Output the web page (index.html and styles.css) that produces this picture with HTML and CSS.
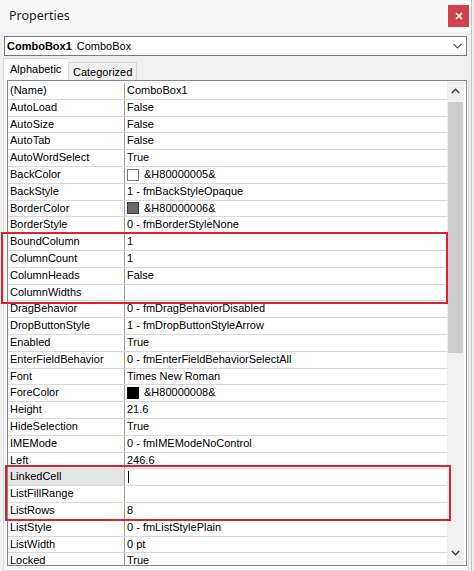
FILE: index.html
```html
<!DOCTYPE html>
<html>
<head>
<meta charset="utf-8">
<link rel="stylesheet" href="styles.css">
</head>
<body>
<div class="window">
  <div class="titlebar">
    <span class="title">Properties</span>
    <div class="close">
      <svg width="8" height="8" viewBox="0 0 8 8"><path d="M1 1L7 7M7 1L1 7" stroke="#fff" stroke-width="1.6"/></svg>
    </div>
  </div>
  <div class="combo">
    <span class="combo-name">ComboBox1</span>
    <span class="combo-type">ComboBox</span>
    <svg class="combo-arrow" width="9" height="6" viewBox="0 0 9 6"><polyline points="0.5,1 4.5,5 8.5,1" fill="none" stroke="#505050" stroke-width="1.1"/></svg>
  </div>
  <div class="tabs">
    <div class="tab active">Alphabetic</div>
    <div class="tab">Categorized</div>
  </div>
  <div class="page">
    <div class="grid">
      <div class="rows">
        <div class="row"><div class="name">(Name)</div><div class="value">ComboBox1</div></div>
        <div class="row"><div class="name">AutoLoad</div><div class="value">False</div></div>
        <div class="row"><div class="name">AutoSize</div><div class="value">False</div></div>
        <div class="row"><div class="name">AutoTab</div><div class="value">False</div></div>
        <div class="row"><div class="name">AutoWordSelect</div><div class="value">True</div></div>
        <div class="row"><div class="name">BackColor</div><div class="value"><span class="swatch sw-white"></span>&amp;H80000005&amp;</div></div>
        <div class="row"><div class="name">BackStyle</div><div class="value">1 - fmBackStyleOpaque</div></div>
        <div class="row"><div class="name">BorderColor</div><div class="value"><span class="swatch sw-gray"></span>&amp;H80000006&amp;</div></div>
        <div class="row"><div class="name">BorderStyle</div><div class="value">0 - fmBorderStyleNone</div></div>
        <div class="row"><div class="name">BoundColumn</div><div class="value">1</div></div>
        <div class="row"><div class="name">ColumnCount</div><div class="value">1</div></div>
        <div class="row"><div class="name">ColumnHeads</div><div class="value">False</div></div>
        <div class="row"><div class="name">ColumnWidths</div><div class="value"></div></div>
        <div class="row"><div class="name">DragBehavior</div><div class="value">0 - fmDragBehaviorDisabled</div></div>
        <div class="row"><div class="name">DropButtonStyle</div><div class="value">1 - fmDropButtonStyleArrow</div></div>
        <div class="row"><div class="name">Enabled</div><div class="value">True</div></div>
        <div class="row"><div class="name">EnterFieldBehavior</div><div class="value">0 - fmEnterFieldBehaviorSelectAll</div></div>
        <div class="row"><div class="name">Font</div><div class="value">Times New Roman</div></div>
        <div class="row"><div class="name">ForeColor</div><div class="value"><span class="swatch sw-black"></span>&amp;H80000008&amp;</div></div>
        <div class="row"><div class="name">Height</div><div class="value">21.6</div></div>
        <div class="row"><div class="name">HideSelection</div><div class="value">True</div></div>
        <div class="row"><div class="name">IMEMode</div><div class="value">0 - fmIMEModeNoControl</div></div>
        <div class="row"><div class="name">Left</div><div class="value">246.6</div></div>
        <div class="row"><div class="name selected">LinkedCell</div><div class="value"><span class="caret"></span></div></div>
        <div class="row"><div class="name">ListFillRange</div><div class="value"></div></div>
        <div class="row"><div class="name">ListRows</div><div class="value">8</div></div>
        <div class="row"><div class="name">ListStyle</div><div class="value">0 - fmListStylePlain</div></div>
        <div class="row"><div class="name">ListWidth</div><div class="value">0 pt</div></div>
        <div class="row"><div class="name">Locked</div><div class="value">True</div></div>
      </div>
      <div class="scrollbar">
        <div class="sb-btn">
          <svg width="9" height="6" viewBox="0 0 9 6"><polyline points="0.8,5 4.5,1.3 8.2,5" fill="none" stroke="#404040" stroke-width="1.5"/></svg>
        </div>
        <div class="sb-thumb"></div>
        <div class="sb-space"></div>
        <div class="sb-btn">
          <svg width="9" height="6" viewBox="0 0 9 6"><polyline points="0.8,1 4.5,4.7 8.2,1" fill="none" stroke="#404040" stroke-width="1.5"/></svg>
        </div>
      </div>
    </div>
  </div>
  <div class="highlight hl-1"></div>
  <div class="highlight hl-2"></div>
</div>
</body>
</html>
```
FILE: styles.css
```css
html, body {
  margin: 0;
  padding: 0;
}
body {
  width: 474px;
  height: 571px;
  overflow: hidden;
  background: #ececec;
  font-family: "Liberation Sans", Arial, sans-serif;
  font-size: 11px;
  color: #000;
}
.window {
  position: relative;
  width: 471px;
  height: 571px;
  border-right: 1px solid #c4c4c4;
  background: #f0f0f0;
  display: flex;
  flex-direction: column;
}
.titlebar {
  height: 32px;
  flex: none;
  background: #f8f8f8;
  display: flex;
  align-items: center;
  justify-content: space-between;
  padding-left: 9px;
}
.title {
  font-family: "Noto Sans", "Liberation Sans", sans-serif;
  font-size: 12.5px;
  color: #1c1c1c;
  margin-top: -1px;
}
.close {
  width: 21px;
  height: 22px;
  margin-right: 2px;
  background: #d0434b;
  display: flex;
  align-items: center;
  justify-content: center;
}
.combo {
  flex: none;
  margin: 4px 4px 0 4px;
  height: 20px;
  box-sizing: border-box;
  border: 1px solid #7a7a7a;
  background: #fff;
  display: flex;
  align-items: center;
  padding-left: 2px;
}
.combo-name {
  font-weight: bold;
  margin-right: 5px;
}
.combo-type {
  flex: 1;
}
.combo-arrow {
  margin-right: 4px;
}
.tabs {
  flex: none;
  height: 22px;
  margin: 2px 0 0 3px;
  display: flex;
  align-items: flex-end;
}
.tab {
  height: 18px;
  box-sizing: border-box;
  border: 1px solid #d9d9d9;
  border-bottom: none;
  padding: 0 4px;
  display: flex;
  align-items: center;
  background: #f0f0f0;
}
.tab.active {
  height: 22px;
  background: #fafafa;
  padding: 0 6px 2px 6px;
  width: 65px;
  border-right: none;
}
.page {
  flex: 1;
  min-height: 0;
  margin: 0 2px 0 3px;
  border: 1px solid #d9d9d9;
  border-top: none;
  background: #fafafa;
  display: flex;
  flex-direction: column;
}
.grid {
  flex: 1;
  min-height: 0;
  margin: 0 1px 4px 3px;
  border: 1px solid #828790;
  background: #fff;
  display: flex;
  overflow: hidden;
}
.rows {
  flex: 1;
  min-width: 0;
  padding-top: 2px;
  overflow: hidden;
}
.row {
  display: grid;
  grid-template-columns: 117px 1fr;
  height: 16.8px;
  box-sizing: border-box;
  border-bottom: 1px solid #d9d9d9;
  line-height: 15.8px;
  white-space: nowrap;
}
.name {
  border-right: 1px solid #a0a0a0;
  padding-left: 2px;
  overflow: hidden;
}
.name.selected {
  background: #e4e4e4;
}
.value {
  padding-left: 2px;
  display: flex;
  align-items: center;
  overflow: hidden;
}
.swatch {
  width: 12px;
  height: 12px;
  box-sizing: border-box;
  border: 1px solid #7a7a7a;
  margin-right: 5px;
  flex: none;
}
.sw-white { background: #fff; }
.sw-gray { background: #686868; border-color: #3c3c3c; }
.sw-black { background: #000; border-color: #000; }
.caret {
  width: 1px;
  height: 12px;
  background: #000;
  margin-left: 1px;
}
.scrollbar {
  width: 17px;
  flex: none;
  margin-right: 2px;
  background: #f0f0f0;
  display: flex;
  flex-direction: column;
}
.sb-btn {
  height: 20px;
  flex: none;
  display: flex;
  align-items: center;
  justify-content: center;
}
.sb-thumb {
  height: 251px;
  flex: none;
  margin: 1px 1px 0 1px;
  background: #cdcdcd;
}
.sb-space {
  flex: 1;
}
.sb-btn:last-child {
  margin-bottom: 2px;
}
.highlight {
  position: absolute;
  box-sizing: border-box;
  border: 2px solid #e2202b;
  pointer-events: none;
}
.hl-1 {
  left: 1px;
  top: 232px;
  width: 447px;
  height: 72px;
}
.hl-2 {
  left: 5px;
  top: 465px;
  width: 446px;
  height: 56px;
}
```
